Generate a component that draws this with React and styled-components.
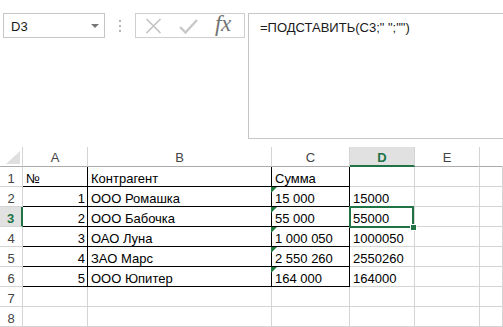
import React from "react";
import styled, { createGlobalStyle, css } from "styled-components";

const Global = createGlobalStyle`
  html, body { margin: 0; padding: 0; background: #fff; }
  body { font-family: "Liberation Sans", Arial, sans-serif; overflow: hidden; }
  * { box-sizing: border-box; }
`;

const Page = styled.div`
  width: 503px;
  height: 327px;
  overflow: hidden;
  display: flex;
  flex-direction: column;
`;

const TopArea = styled.div`
  height: 148px;
  display: flex;
  align-items: flex-start;
  padding-top: 13px;
  padding-left: 3px;
`;

const NameBox = styled.div`
  width: 102px;
  height: 25px;
  border: 1px solid #c6c6c6;
  display: flex;
  align-items: center;
  justify-content: space-between;
  padding: 1px 5px 0 7px;
  font-size: 13px;
  color: #1a1a1a;
`;

const DropArrow = styled.span`
  width: 0;
  height: 0;
  border-left: 4px solid transparent;
  border-right: 4px solid transparent;
  border-top: 4px solid #777;
  margin-top: -1px;
`;

const Dots = styled.div`
  width: 30px;
  height: 25px;
  display: flex;
  flex-direction: column;
  align-items: center;
  justify-content: center;
  gap: 3px;
  & > span {
    width: 2px;
    height: 2px;
    background: #b4b4b4;
  }
`;

const FxBox = styled.div`
  width: 110px;
  height: 25px;
  border: 1px solid #cfcfcf;
  display: flex;
  align-items: center;
  padding-left: 9px;
  gap: 17px;
`;

const Fx = styled.span`
  font-family: "Liberation Serif", "DejaVu Serif", serif;
  font-style: italic;
  font-size: 23px;
  color: #737373;
  letter-spacing: -0.5px;
  margin-top: -3px;
  margin-left: 0px;
`;

const FormulaBar = styled.div`
  flex: 1;
  margin-left: 3px;
  height: 126px;
  border: 1px solid #c6c6c6;
  border-right: none;
  padding: 6px 0 0 11px;
  font-size: 13px;
  line-height: 16px;
  color: #1a1a1a;
  white-space: pre;
`;

const Sheet = styled.div`
  position: relative;
  display: grid;
  grid-template-columns: 23px 65px 184px 78px 65px 65px 1fr;
  grid-auto-rows: 20px;
`;

const HeadCell = styled.div`
  border-right: 1px solid ${(p) => (p.$last ? "transparent" : "#d4d4d4")};
  border-bottom: 1px solid #ababab;
  font-size: 13px;
  color: #444;
  text-align: center;
  line-height: 17px;
  padding-top: 2px;
  ${(p) =>
    p.$active &&
    css`
      background: #e1e1e1;
      color: #217346;
      font-weight: bold;
      border-bottom: 2px solid #217346;
    `}
`;

const Corner = styled.div`
  position: relative;
  border-right: 1px solid #d4d4d4;
  border-bottom: 1px solid #ababab;
  &::after {
    content: "";
    position: absolute;
    right: 2px;
    bottom: 2px;
    width: 0;
    height: 0;
    border-left: 14px solid transparent;
    border-bottom: 13px solid #dfdfdf;
  }
`;

const RowHead = styled.div`
  border-right: 1px solid #d4d4d4;
  border-bottom: 1px solid #d4d4d4;
  font-size: 13px;
  color: #444;
  text-align: center;
  line-height: 17px;
  padding-top: 3px;
  ${(p) =>
    p.$active &&
    css`
      background: #e1e1e1;
      color: #217346;
      font-weight: bold;
      border-right: 2px solid #217346;
    `}
`;

const Cell = styled.div`
  position: relative;
  border-right: 1px solid ${(p) => (p.$br ? "#000" : "#d4d4d4")};
  border-bottom: 1px solid ${(p) => (p.$bb ? "#000" : "#d4d4d4")};
  font-size: 13px;
  color: #000;
  line-height: 17px;
  padding: 3px 2px 0 3px;
  white-space: nowrap;
  overflow: visible;
  text-align: ${(p) => (p.$right ? "right" : "left")};
  ${(p) =>
    p.$flag &&
    css`
      &::before {
        content: "";
        position: absolute;
        left: -1px;
        top: 0;
        width: 0;
        height: 0;
        border-top: 6px solid #1e7b3c;
        border-right: 6px solid transparent;
      }
    `}
`;

const Selection = styled.div`
  position: absolute;
  left: 349px;
  top: 59px;
  width: 65px;
  height: 22px;
  border: 2px solid #217346;
  pointer-events: none;
`;

const Handle = styled.div`
  position: absolute;
  right: -5px;
  bottom: -5px;
  width: 7px;
  height: 7px;
  background: #217346;
  border: 1px solid #fff;
`;

const cols = ["A", "B", "C", "D", "E", ""];

const data = [
  ["№", "Контрагент", "Сумма", ""],
  ["1", "ООО Ромашка", "15 000", "15000"],
  ["2", "ООО Бабочка", "55 000", "55000"],
  ["3", "ОАО Луна", "1 000 050", "1000050"],
  ["4", "ЗАО Марс", "2 550 260", "2550260"],
  ["5", "ООО Юпитер", "164 000", "164000"],
  ["", "", "", ""],
  ["", "", "", ""],
];

const XIcon = () => (
  <svg width="17" height="16" viewBox="0 0 17 16">
    <path d="M1.5 1 L15.5 15 M15.5 1 L1.5 15" stroke="#c4c4c4" strokeWidth="1.7" fill="none" />
  </svg>
);

const CheckIcon = () => (
  <svg width="19" height="16" viewBox="0 0 19 16">
    <path d="M1 9 L6.5 14.5 L18 2" stroke="#c8c8c8" strokeWidth="2.4" fill="none" />
  </svg>
);

export default function App() {
  return (
    <Page>
      <Global />
      <TopArea>
        <NameBox>
          <span>D3</span>
          <DropArrow />
        </NameBox>
        <Dots>
          <span />
          <span />
          <span />
        </Dots>
        <FxBox>
          <XIcon />
          <CheckIcon />
          <Fx>fx</Fx>
        </FxBox>
        <FormulaBar>{'=ПОДСТАВИТЬ(C3;" ";"")'}</FormulaBar>
      </TopArea>
      <Sheet>
        <Corner />
        {cols.map((c, i) => (
          <HeadCell key={i} $active={c === "D"} $last={i === cols.length - 1}>
            {c}
          </HeadCell>
        ))}
        {data.map((row, r) => {
          const inTable = r <= 5;
          return (
            <React.Fragment key={r}>
              <RowHead $active={r === 2}>{r + 1}</RowHead>
              <Cell $br={inTable} $bb={inTable} $right={r > 0}>
                {row[0]}
              </Cell>
              <Cell $br={inTable} $bb={inTable}>
                {row[1]}
              </Cell>
              <Cell $br={inTable} $bb={inTable} $flag={r >= 1 && r <= 5}>
                {row[2]}
              </Cell>
              <Cell>{row[3]}</Cell>
              <Cell />
              <Cell />
            </React.Fragment>
          );
        })}
        <Selection>
          <Handle />
        </Selection>
      </Sheet>
    </Page>
  );
}
